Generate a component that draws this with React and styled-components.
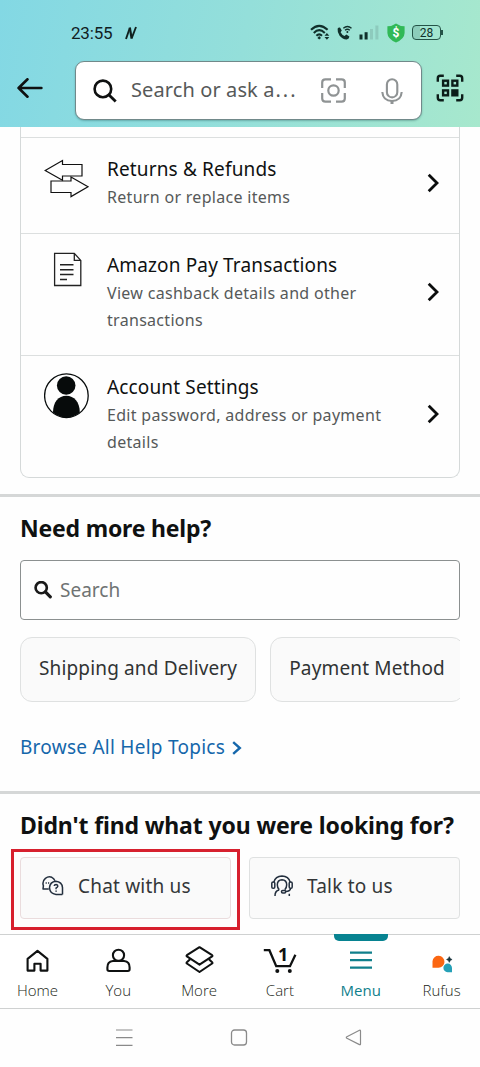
import React from 'react'
import styled, { createGlobalStyle } from 'styled-components'

function App() {
  return (
    <Screen>
      <GlobalStyle />
      <Header>
        <StatusBar>
          <Clock>23:55</Clock>
          <NewsIcon />
          <StatusIcons />
        </StatusBar>
        <SearchRow>
          <BackIcon />
          <SearchBar>
            <GlassIcon />
            <SearchHint>Search or ask a<Dots>...</Dots></SearchHint>
            <LensIcon />
            <MicIcon />
          </SearchBar>
          <ScanIcon />
        </SearchRow>
      </Header>

      <Content>
        <Card>
          <Row>
            <ReturnsIcon />
            <RowText>
              <Title>Returns &amp; Refunds</Title>
              <Subtitle>Return or replace items</Subtitle>
            </RowText>
            <Chevron />
          </Row>
          <Row>
            <PageIcon />
            <RowText>
              <Title>Amazon Pay Transactions</Title>
              <Subtitle>View cashback details and other<br />transactions</Subtitle>
            </RowText>
            <Chevron />
          </Row>
          <Row>
            <AccountIcon />
            <RowText>
              <Title>Account Settings</Title>
              <Subtitle>Edit password, address or payment<br />details</Subtitle>
            </RowText>
            <Chevron />
          </Row>
        </Card>

        <Help>
          <Heading $spacing="-0.2px">Need more help?</Heading>
          <HelpSearch>
            <SmallGlassIcon />
            <HelpHint>Search</HelpHint>
          </HelpSearch>
          <Chips>
            <Chip>Shipping and Delivery</Chip>
            <Chip>Payment Method</Chip>
          </Chips>
          <BrowseLink>
            Browse All Help Topics
            <svg width="10" height="14" viewBox="0 0 10 14" fill="none" stroke="#1567ab" strokeWidth="2.4">
              <path d="M1.2 1.2 L7.8 7 L1.2 12.8" />
            </svg>
          </BrowseLink>
        </Help>

        <Contact>
          <Heading>Didn't find what you were looking for?</Heading>
          <ContactButtons>
            <ContactButton $highlighted>
              <ChatIcon />
              Chat with us
            </ContactButton>
            <ContactButton>
              <HeadsetIcon />
              Talk to us
            </ContactButton>
          </ContactButtons>
        </Contact>
      </Content>

      <TabBar>
        <Tab><HomeIcon />Home</Tab>
        <Tab><YouIcon />You</Tab>
        <Tab><MoreIcon />More</Tab>
        <Tab><CartIcon />Cart</Tab>
        <Tab $active><MenuIcon />Menu</Tab>
        <Tab><RufusIcon />Rufus</Tab>
      </TabBar>

      <SystemBar>
        <svg width="18" height="18" viewBox="0 0 18 18" fill="none" stroke="#8a8a8a" strokeWidth="1.2">
          <path d="M1 1 H17.5 M1 8.7 H17.5 M1 16.3 H17.5" />
        </svg>
        <svg width="18" height="18" viewBox="0 0 18 18" fill="none" stroke="#8a8a8a" strokeWidth="1.3">
          <rect x="1.5" y="1" width="15" height="15" rx="3" />
        </svg>
        <svg width="18" height="18" viewBox="0 0 18 18" fill="none" stroke="#8a8a8a" strokeWidth="1.2" strokeLinejoin="round">
          <path d="M15.5 1.3 Q16.5 0.9 16.5 2.1 V14.9 Q16.5 16.1 15.5 15.6 L2.9 9.3 Q1.7 8.5 2.9 7.7 Z" />
        </svg>
      </SystemBar>
    </Screen>
  )
}

export default App

const NewsIcon = () => (
  <svg width="12" height="14" viewBox="0 0 12 14" fill="none" stroke="#10201f">
    <path d="M1 13 L4.8 2" strokeWidth="1.9" />
    <path d="M4.8 1.5 L6.6 12.5" strokeWidth="2.2" />
    <path d="M6.6 12.5 L11 1" strokeWidth="1.9" />
  </svg>
)

const StatusIcons = () => (
  <StatusGroup>
    <svg width="20" height="17" viewBox="0 0 20 17" fill="none" stroke="#10302b" strokeWidth="2.1">
      <path d="M1 5.8 Q9.2 -2 17.6 5.8" />
      <path d="M3.8 8.9 Q9.2 3.5 14.8 8.9" />
      <path d="M6.4 11.7 Q9.2 9 12 11.7" />
      <path d="M9.2 12 L11 14 L9.2 15.6 L7.4 14 Z" fill="#10302b" stroke="none" />
      <path d="M16.9 9 L19.3 11.7 H14.5 Z M16.9 15.8 L19.3 13 H14.5 Z" fill="#10302b" stroke="none" />
    </svg>
    <svg width="15" height="16" viewBox="0 0 15 16" fill="none" stroke="#10302b">
      <path d="M0.6 3.8 Q1.2 2.2 3 2.4 L4.8 5.4 L3.6 7.3 Q4.8 10 7.6 11 L9.3 9.6 L12.4 11.5 Q12.2 14 9.8 14.4 Q5.8 14.6 2.6 10.8 Q0.2 7.4 0.6 3.8 Z" fill="#10302b" stroke="none" />
      <path d="M6.3 3.2 Q10.4 -0.2 14.5 3.2 M8 5.3 Q10.4 3.2 12.8 5.3" strokeWidth="1.3" />
      <circle cx="10.4" cy="7" r="1" fill="#10302b" stroke="none" />
    </svg>
    <svg width="20" height="15" viewBox="0 0 20 15">
      <rect x="0.5" y="9.5" width="3" height="5" fill="#10302b" />
      <rect x="5.6" y="7.2" width="3" height="7.3" fill="#10302b" />
      <rect x="11" y="4" width="3" height="10.5" fill="#8dcbbd" />
      <rect x="16.4" y="0.5" width="3" height="14" fill="#8dcbbd" />
    </svg>
    <Shield>
      <svg width="18" height="20" viewBox="0 0 18 20">
        <path d="M9 0.4 Q12.5 3 17.6 3.2 V10 Q17.4 16 9 19.5 Q0.6 16 0.4 10 V3.2 Q5.5 3 9 0.4 Z" fill="#31b957" />
      </svg>
      <ShieldSign>$</ShieldSign>
    </Shield>
    <Battery>28</Battery>
  </StatusGroup>
)

const BackIcon = () => (
  <svg width="26" height="20" viewBox="0 0 26 20" fill="none" stroke="#0f1111" strokeWidth="2.6" strokeLinecap="round" strokeLinejoin="round">
    <path d="M10.5 1.3 L1.6 10 L10.5 18.7 M1.6 10 H24.4" />
  </svg>
)

const GlassIcon = () => (
  <svg width="24" height="24" viewBox="0 0 24 24" fill="none" stroke="#0f1111" strokeWidth="2.6">
    <circle cx="9.9" cy="9.9" r="8.3" />
    <path d="M15.8 15.8 L22.7 22.6" strokeWidth="2.8" />
  </svg>
)

const LensIcon = () => (
  <svg width="25" height="25" viewBox="0 0 25 25" fill="none" stroke="#8f9394" strokeWidth="2.2">
    <path d="M1.2 10 V4.4 Q1.2 1.3 4.4 1.3 H10 M15 1.3 H20.6 Q23.8 1.3 23.8 4.4 V10 M23.8 15 V20.6 Q23.8 23.7 20.6 23.7 H15 M10 23.7 H4.4 Q1.2 23.7 1.2 20.6 V15" />
    <circle cx="12.5" cy="12.5" r="5.2" />
  </svg>
)

const MicIcon = () => (
  <svg width="22" height="26" viewBox="0 0 22 26" fill="none" stroke="#8f9394" strokeWidth="2.1">
    <rect x="5.9" y="1.2" width="10.4" height="18.2" rx="5.2" />
    <path d="M1.3 14 Q2 23 11 23 Q20 23 20.7 14" />
    <path d="M11 23 V26" strokeWidth="3" />
  </svg>
)

const ScanIcon = () => (
  <svg width="28" height="28" viewBox="0 0 28 28" fill="none" stroke="#0c1d19" strokeWidth="2.4">
    <path d="M1.8 7.8 V4.3 Q1.8 1.8 4.3 1.8 H7.8 M20.2 1.8 H23.7 Q26.2 1.8 26.2 4.3 V7.8 M26.2 20.2 V23.7 Q26.2 26.2 23.7 26.2 H20.2 M7.8 26.2 H4.3 Q1.8 26.2 1.8 23.7 V20.2" />
    <rect x="7.1" y="6.7" width="4.9" height="4.9" />
    <rect x="16.4" y="6.7" width="4.9" height="4.9" />
    <rect x="7.1" y="16.4" width="4.9" height="4.9" />
    <rect x="16.4" y="16.4" width="4.9" height="4.9" fill="#0c1d19" />
  </svg>
)

const ReturnsIcon = () => (
  <svg width="46" height="46" viewBox="0 0 46 46" fill="none" stroke="#111" strokeWidth="1.2">
    <path d="M1.2 15.5 L18.5 5.5 V9.5 H38 V21 H18.5 V25.3 Z" />
    <path d="M7 26 H27 V22 L44 31.8 L27 41.6 V37.5 H7 Z" />
  </svg>
)

const PageIcon = () => (
  <svg width="46" height="46" viewBox="0 0 46 46" fill="none" stroke="#222" strokeWidth="1.3">
    <path d="M10.6 2.4 H30.3 L36.8 9.4 V34.5 H10.6 Z M30.3 2.4 V9.4 H36.8" />
    <path d="M16 13.8 H29.5 M16 18.7 H29.5 M16 23.6 H29.5 M16 28.4 H23" strokeWidth="1.5" />
  </svg>
)

const AccountIcon = () => (
  <svg width="46" height="46" viewBox="0 0 46 46" fill="#070b0b">
    <circle cx="22.4" cy="22.7" r="21.8" fill="none" stroke="#070b0b" strokeWidth="1.3" />
    <circle cx="22.2" cy="12.5" r="9.3" />
    <path d="M9 39.6 C9 29 14.5 22.8 22.3 22.8 S35.8 29 35.8 39.6 Q29.5 44.7 22.4 44.7 T9 39.6 Z" />
  </svg>
)

const Chevron = () => (
  <svg width="13" height="20" viewBox="0 0 13 20" fill="none" stroke="#0b0d0d" strokeWidth="2.8">
    <path d="M1.7 1.8 L10 10 L1.7 18.2" />
  </svg>
)

const SmallGlassIcon = () => (
  <svg width="18" height="18" viewBox="0 0 17 17" fill="none" stroke="#1a1a1a" strokeWidth="2.5">
    <circle cx="6.8" cy="6.3" r="5.3" />
    <path d="M10.8 10.3 L15.4 14.9" strokeWidth="3" strokeLinecap="round" />
  </svg>
)

const ChatIcon = () => (
  <svg width="22" height="20" viewBox="0 0 22 20" fill="none" stroke="#232f3e" strokeWidth="1.5" strokeLinejoin="round">
    <path d="M6.8 13 H1 L1.4 9.8 Q-0.1 5.2 3.4 2.3 Q6.6 0 9.8 1.3 Q12 2.4 12.9 4.8" />
    <path d="M20.4 18.6 L19.9 18.6 L14 18.4 Q7.9 17.8 7.5 11.8 Q8 5.8 13.8 5.3 Q20 5.8 20.5 11.6 V18.6" />
    <path d="M12.2 10 Q12.4 8.5 14.1 8.5 Q15.9 8.7 15.8 10.3 Q15.7 11.4 14.1 12 V13.3 M14.1 14.4 V15.8" />
    <path d="M3.6 7 H4.8 M6 7 H7.2" />
  </svg>
)

const HeadsetIcon = () => (
  <svg width="22" height="22" viewBox="0 0 22 22" fill="none" stroke="#232f3e" strokeWidth="1.5">
    <path d="M2.8 7.2 Q4.4 1.1 11 1 Q17.6 1.1 19.2 7.2" />
    <rect x="0.8" y="7" width="3" height="6.2" rx="1.3" />
    <rect x="18.2" y="7" width="3" height="6.2" rx="1.3" />
    <path d="M8.2 14.8 Q6.3 12.6 6.3 9.7 Q6.4 4.9 11 4.7 Q15.6 4.9 15.7 9.7 Q15.7 12.4 13.8 14.8" />
    <path d="M19.7 13.2 Q19.2 16.5 14.7 16.6" />
    <rect x="10.5" y="15.4" width="4.2" height="2.5" rx="1.2" />
    <path d="M4 20.9 Q3.9 15.8 8.2 15 M18.3 20.9 V18.8" />
  </svg>
)

const HomeIcon = () => (
  <svg width="28" height="28" viewBox="-0.5 0 28 28" fill="none" stroke="#0f1111" strokeWidth="2.1" strokeLinejoin="round">
    <path d="M4.1 11.9 L14 3.9 L23.9 11.9 V23.6 H17.1 V16.8 H10.9 V23.6 H4.1 Z" />
  </svg>
)

const YouIcon = () => (
  <svg width="28" height="28" viewBox="-0.5 0 28 28" fill="none" stroke="#0f1111" strokeWidth="2.1">
    <circle cx="14" cy="8.3" r="5.6" />
    <path d="M8.4 14 H19.6 Q25.2 14.4 25.1 20.6 V22.3 Q25.1 24 23.3 24 H4.7 Q2.9 24 2.9 22.3 V20.6 Q2.8 14.4 8.4 14 Z" />
  </svg>
)

const MoreIcon = () => (
  <svg width="28" height="28" viewBox="-0.5 1 28 28" fill="none" stroke="#0f1111" strokeWidth="2.1" strokeLinejoin="round" overflow="visible">
    <path d="M14 1.2 L26.6 9.2 Q27.3 9.8 26.6 10.4 L14 18.6 L1.4 10.4 Q0.7 9.8 1.4 9.2 Z" />
    <path d="M4.6 13.3 L1.4 16.2 Q0.7 16.9 1.4 17.5 L14 26 L26.6 17.5 Q27.3 16.9 26.6 16.2 L23.4 13.3" />
  </svg>
)

const CartIcon = () => (
  <CartBox>
    <svg width="34" height="28" viewBox="0 1 34 28" fill="none" stroke="#0f1111" strokeWidth="2.3">
      <path d="M0.8 4.2 H6.4 L13.2 20.2 H27 L32.4 8.8" />
      <circle cx="14.3" cy="25.1" r="2" fill="#0f1111" stroke="none" />
      <circle cx="26.8" cy="25.1" r="2" fill="#0f1111" stroke="none" />
    </svg>
    <CartCount>1</CartCount>
  </CartBox>
)

const MenuIcon = () => (
  <svg width="28" height="28" viewBox="0 1 28 28" fill="none" stroke="#10808c" strokeWidth="2.2">
    <path d="M3 6.6 H25 M3 14.2 H25 M3 21.7 H25" />
  </svg>
)

const RufusIcon = () => (
  <svg width="28" height="28" viewBox="-0.5 1 28 28">
    <path d="M4 21.8 V15.3 A6 6 0 1 1 10 21.8 Z" fill="#fb6611" />
    <path d="M23.5 26.2 H19 A4.3 4.3 0 1 1 23.5 22 Z" fill="#25a0b7" />
    <path d="M20.8 10.6 L21.8 12.5 L23.6 13.5 L21.8 14.5 L20.8 16.4 L19.8 14.5 L18 13.5 L19.8 12.5 Z" fill="#17323b" stroke="#17323b" strokeWidth="0.5" />
  </svg>
)

const GlobalStyle = createGlobalStyle`
  *, *:before, *:after {
    box-sizing: border-box;
  }
  body {
    margin: 0;
    background: #fefefe;
    font-family: "Noto Sans", "Open Sans", sans-serif;
    color: #0f1111;
  }
  svg {
    display: block;
    flex-shrink: 0;
  }
`

const Screen = styled.div`
  width: 480px;
  height: 1067px;
  display: flex;
  flex-direction: column;
  overflow: hidden;
  white-space: nowrap;
`

const Header = styled.header`
  height: 127px;
  flex-shrink: 0;
  background: linear-gradient(100deg, #83d8e4 0%, #94dfda 50%, #a7e8cd 100%);
`

const StatusBar = styled.div`
  height: 61px;
  padding: 4px 39px 0 71px;
  display: flex;
  align-items: center;
`

const Clock = styled.span`
  font-family: Roboto, sans-serif;
  font-size: 17px;
  letter-spacing: -0.2px;
  width: 54px;
  color: #10201f;
`

const StatusGroup = styled.div`
  margin-left: auto;
  display: flex;
  align-items: center;
  gap: 7px;
`

const Shield = styled.div`
  position: relative;
  width: 18px;
  margin-left: 1px;
`

const ShieldSign = styled.span`
  position: absolute;
  inset: 0;
  font: bold 12px/20px Roboto, sans-serif;
  text-align: center;
  color: #fff;
`

const Battery = styled.div`
  position: relative;
  width: 29px;
  height: 15px;
  border: 1.5px solid #245347;
  border-radius: 4px;
  background: linear-gradient(90deg, #8ccdbb 7px, transparent 7px);
  font: 12px/14px Roboto, sans-serif;
  text-align: center;
  color: #10302b;

  &:after {
    content: "";
    position: absolute;
    right: -3px;
    top: 4px;
    width: 2px;
    height: 5px;
    background: #245347;
  }
`

const SearchRow = styled.div`
  display: flex;
  align-items: center;
  padding: 0 15px 0 17px;

  & > svg:last-child {
    margin-bottom: 5px;
  }
  & > svg:first-child {
    margin-bottom: 5px;
  }
`

const SearchBar = styled.div`
  width: 347px;
  height: 59px;
  margin: 0 14px 0 32px;
  padding: 0 17px;
  display: flex;
  align-items: center;
  flex-shrink: 0;
  background: #fff;
  border: 1px solid #71898a;
  border-radius: 9px;
  box-shadow: 0 1px 2px rgba(30, 80, 80, 0.35);
`

const SearchHint = styled.span`
  width: 190px;
  margin-left: 14px;
  flex-shrink: 0;
  font-size: 20px;
  line-height: 28px;
  padding-bottom: 1px;
  letter-spacing: 0.1px;
  color: #565959;

  & + svg {
    margin-right: 35px;
  }
`

const Dots = styled.span`
  margin-left: 1px;
  letter-spacing: 2px;
`

const Content = styled.main`
  height: 807px;
  flex-shrink: 0;
`

const Card = styled.section`
  margin: 0 20px;
  height: 351px;
  padding-top: 10px;
  border: 1px solid #d5d9d9;
  border-top: none;
  border-radius: 0 0 9px 9px;
`

const Row = styled.div`
  display: flex;
  min-height: 96px;
  padding: 17px 19px 21px 23px;
  border-top: 1px solid #dcdfdf;

  & > svg:last-child {
    align-self: center;
    margin: 0 0 2px auto;
  }
`

const RowText = styled.div`
  margin: 1px 0 0 17px;
  line-height: 27px;
`

const Title = styled.div`
  font-size: 19px;
  letter-spacing: 0.15px;
`

const Subtitle = styled.div`
  margin-top: 1px;
  font-size: 16px;
  letter-spacing: 0.3px;
  color: #565959;
`

const Help = styled.section`
  margin-top: 16px;
  height: 297px;
  padding: 15px 20px 0;
  border-top: 3px solid #d5d7d7;
`

const Heading = styled.h2`
  margin: 0;
  font-size: 23px;
  line-height: 32px;
  font-weight: 700;
  letter-spacing: ${(props) => props.$spacing || '-0.13px'};
`

const HelpSearch = styled.div`
  height: 60px;
  margin-top: 16px;
  padding-left: 13px;
  display: flex;
  align-items: center;
  border: 1.5px solid #8b9090;
  border-radius: 4px;
`

const HelpHint = styled.span`
  margin-left: 8px;
  font-size: 19px;
  color: #6f7373;
`

const Chips = styled.div`
  display: flex;
  gap: 14px;
  margin-top: 17px;
  overflow: hidden;
`

const Chip = styled.div`
  height: 65px;
  padding: 0 18px;
  flex-shrink: 0;
  font-size: 19px;
  line-height: 60px;
  letter-spacing: 0.15px;
  color: #303333;
  background: #fafafa;
  border: 1px solid #dfe1e1;
  border-radius: 12px;
`

const BrowseLink = styled.a`
  margin-top: 32px;
  display: flex;
  align-items: center;
  gap: 7px;
  font-size: 19px;
  line-height: 27px;
  letter-spacing: 0.26px;
  color: #1567ab;
`

const Contact = styled.section`
  border-top: 3px solid #d5d7d7;
  padding: 15px 20px 0;
`

const ContactButtons = styled.div`
  display: flex;
  justify-content: space-between;
  margin-top: 16px;
`

const ContactButton = styled.div`
  position: relative;
  width: 211px;
  height: 62px;
  padding: 0 0 4px 21px;
  display: flex;
  align-items: center;
  gap: 14px;
  font-size: 19px;
  letter-spacing: 0.2px;
  color: #333638;
  background: #fafafa;
  border: 1px solid ${(props) => (props.$highlighted ? '#eadcdd' : '#dfe1e1')};
  border-radius: 4px;

  ${(props) => props.$highlighted && `
    &:after {
      content: "";
      position: absolute;
      left: -10px;
      top: -9px;
      width: 229px;
      height: 81px;
      border: 3px solid #d7202e;
    }
  `}
`

const TabBar = styled.nav`
  width: 485px;
  height: 75px;
  margin-left: -3px;
  flex-shrink: 0;
  display: grid;
  grid-template-columns: repeat(6, 1fr);
  background: #fff;
  border-top: 1px solid #cfd1d1;
  border-bottom: 1px solid #cfd1d1;
`

const Tab = styled.div`
  position: relative;
  padding-top: 12px;
  display: flex;
  flex-direction: column;
  align-items: center;
  font-family: "Open Sans", "Noto Sans", sans-serif;
  font-size: 15px;
  line-height: 30px;
  font-weight: ${(props) => (props.$active ? 500 : 300)};
  color: ${(props) => (props.$active ? '#10808c' : '#1c1f20')};

  ${(props) => props.$active && `
    &:before {
      content: "";
      position: absolute;
      top: -1px;
      width: 54px;
      height: 7px;
      border-radius: 0 0 5px 5px;
      background: #078391;
    }
  `}
`

const CartBox = styled.div`
  position: relative;
`

const CartCount = styled.span`
  position: absolute;
  left: 15px;
  top: -2px;
  font-family: "Noto Sans", sans-serif;
  font-size: 18px;
  line-height: 18px;
  font-weight: 700;
  color: #0f1111;
`

const SystemBar = styled.footer`
  flex: 1;
  padding: 20px 118px 0 115px;
  display: flex;
  justify-content: space-between;
  background: #fefefe;
`
